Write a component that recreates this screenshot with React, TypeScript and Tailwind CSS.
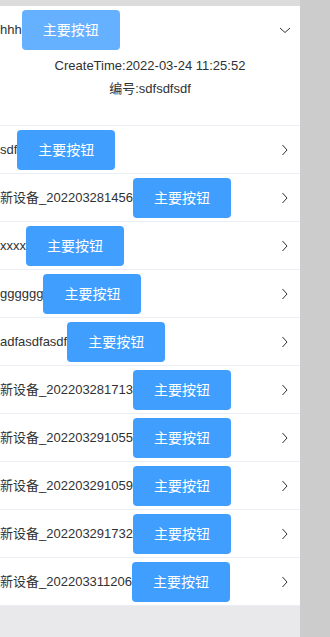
const rows = [
  'sdf',
  '新设备_202203281456',
  'xxxx',
  'gggggg',
  'adfasdfasdf',
  '新设备_202203281713',
  '新设备_202203291055',
  '新设备_202203291059',
  '新设备_202203291732',
  '新设备_202203311206',
]

function Arrow({ down }: { down?: boolean }) {
  return (
    <svg width="12" height="12" viewBox="0 0 12 12" className="ml-auto mr-[9px] shrink-0">
      <path
        d={down ? 'M1 4 L6 8.5 L11 4' : 'M3.5 1 L8 6 L3.5 11'}
        fill="none"
        stroke="#303133"
        strokeWidth="1"
      />
    </svg>
  )
}

function PrimaryButton({ light }: { light?: boolean }) {
  return (
    <button
      className={
        'h-[40px] w-[98px] shrink-0 rounded-[4px] text-[14px] leading-none text-white ' +
        (light ? 'bg-[#66b1ff]' : 'bg-[#409eff]')
      }
    >
      主要按钮
    </button>
  )
}

export default function App() {
  return (
    <div
      className="flex h-[637px] w-[330px] overflow-hidden"
      style={{ fontFamily: '"Liberation Sans", "Noto Sans CJK SC", sans-serif' }}
    >
      <div className="flex w-[300px] flex-col overflow-hidden">
        <div className="h-[6px] bg-[#dcdcdc]" />
        <div className="bg-white text-[#303133]">
          <div className="border-b border-[#ebeef5]">
            <div className="flex h-[48px] items-center text-[13px]">
              <span className="whitespace-nowrap">hhh</span>
              <PrimaryButton light />
              <Arrow down />
            </div>
            <div className="pb-[25px] text-center text-[13px] leading-[23px]">
              <div>CreateTime:2022-03-24 11:25:52</div>
              <div>编号:sdfsdfsdf</div>
            </div>
          </div>
          {rows.map((r, i) => (
            <div key={i} className="flex h-[48px] items-center border-b border-[#ebeef5] text-[13px]">
              <span className="whitespace-nowrap">{r}</span>
              <PrimaryButton />
              <Arrow />
            </div>
          ))}
        </div>
        <div className="flex-1 bg-[#e9e9eb]" />
      </div>
      <div className="w-[30px] bg-[#cccccc]" />
    </div>
  )
}
